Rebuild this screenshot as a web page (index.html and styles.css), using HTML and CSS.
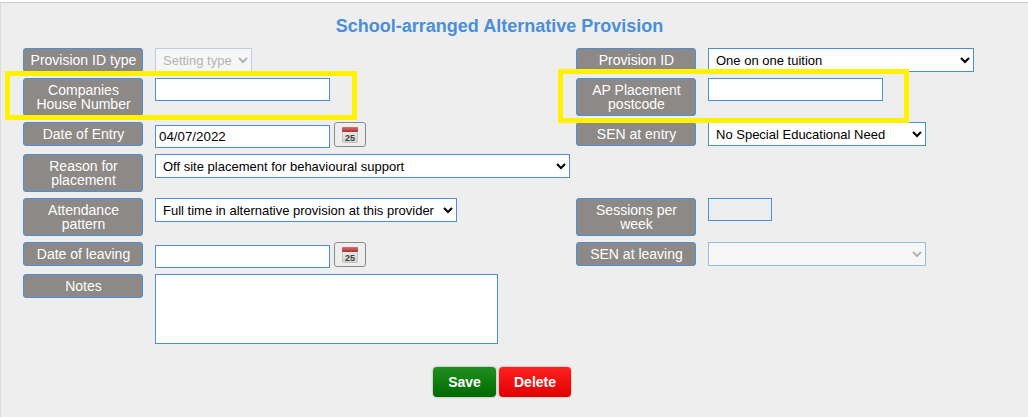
FILE: index.html
```html
<!DOCTYPE html>
<html lang="en">
<head>
<meta charset="utf-8">
<title>School-arranged Alternative Provision</title>
<link rel="stylesheet" href="styles.css">
</head>
<body>
<svg class="sprites" width="0" height="0" aria-hidden="true">
  <defs>
    <linearGradient id="calBody" x1="0" y1="0" x2="0" y2="1"><stop offset="0" stop-color="#f4f4f2"/><stop offset="1" stop-color="#cfcfcb"/></linearGradient>
    <linearGradient id="calTop" x1="0" y1="0" x2="0" y2="1"><stop offset="0" stop-color="#d9706f"/><stop offset="1" stop-color="#a92f2f"/></linearGradient>
    <symbol id="cal" viewBox="0 0 16 16">
      <rect x="0.5" y="0.5" width="15" height="15" rx="1" fill="url(#calBody)" stroke="#c4c4c0"/>
      <rect x="0" y="0" width="16" height="5" rx="1" fill="url(#calTop)"/>
      <text x="8" y="14" text-anchor="middle" class="cal-num">25</text>
    </symbol>
  </defs>
</svg>
<main class="page">
  <h1 class="title">School-arranged Alternative Provision</h1>
  <form class="grid">
    <label class="lbl">Provision ID type</label>
    <div class="field"><select class="ctl sel-type" disabled><option>Setting type</option></select></div>
    <label class="lbl">Provision ID</label>
    <div class="field"><select class="ctl sel-prov"><option>One on one tuition</option></select></div>

    <label class="lbl">Companies House Number</label>
    <div class="field"><input class="ctl txt" type="text"></div>
    <label class="lbl">AP Placement postcode</label>
    <div class="field"><input class="ctl txt" type="text"></div>

    <label class="lbl">Date of Entry</label>
    <div class="field date"><input class="ctl txt date-input" type="text" value="04/07/2022"><button class="cal-btn" type="button" aria-label="Calendar"><svg class="cal-ico"><use href="#cal"/></svg></button></div>
    <label class="lbl">SEN at entry</label>
    <div class="field"><select class="ctl sel-sen"><option>No Special Educational Need</option></select></div>

    <label class="lbl">Reason for placement</label>
    <div class="field"><select class="ctl sel-reason"><option>Off site placement for behavioural support</option></select></div>
    <div class="blank"></div>
    <div class="blank"></div>

    <label class="lbl">Attendance pattern</label>
    <div class="field"><select class="ctl sel-att"><option>Full time in alternative provision at this provider</option></select></div>
    <label class="lbl">Sessions per week</label>
    <div class="field"><input class="ctl txt sessions" type="text"></div>

    <label class="lbl">Date of leaving</label>
    <div class="field date"><input class="ctl txt date-input" type="text"><button class="cal-btn" type="button" aria-label="Calendar"><svg class="cal-ico"><use href="#cal"/></svg></button></div>
    <label class="lbl">SEN at leaving</label>
    <div class="field"><select class="ctl sel-sen sel-off" disabled><option></option></select></div>

    <label class="lbl">Notes</label>
    <div class="field notes-cell"><textarea class="ctl notes"></textarea></div>
  </form>
  <div class="actions">
    <button class="btn save" type="button">Save</button>
    <button class="btn delete" type="button">Delete</button>
  </div>
  <div class="mark mark-left"></div>
  <div class="mark mark-right"></div>
</main>
</body>
</html>
```
FILE: styles.css
```css
* { box-sizing: border-box; }
html, body { height: 100%; }
body {
  margin: 0;
  background: #fff;
  font-family: "Liberation Sans", Arial, sans-serif;
  overflow: hidden;
}
.sprites { position: absolute; }
.page {
  position: relative;
  height: 415px;
  background: #eee;
  border-top: 1px solid #ccc;
  border-left: 1px solid #ddd;
  margin-top: 2px;
  padding: 13px 0 0 22px;
}
.title {
  margin: 0;
  width: 953px;
  font-size: 18px;
  line-height: 20px;
  font-weight: bold;
  color: #4a8fd8;
  text-align: center;
}
.grid {
  display: grid;
  grid-template-columns: 120px 409px 120px 266px;
  grid-template-rows: 24px 38px 26px 38px 38px 26px 70px;
  column-gap: 12px;
  row-gap: 6px;
  margin-top: 12px;
}
.lbl {
  display: flex;
  align-items: center;
  justify-content: center;
  align-self: start;
  min-height: 24px;
  padding: 4px 5px 4px 6px;
  background: #8c8987;
  border: 1px solid #4a90d9;
  border-radius: 3px;
  color: #fff;
  font-size: 14px;
  line-height: 14px;
  text-align: center;
}
.field { display: flex; align-items: flex-start; min-width: 0; }
.date { gap: 4px; }
.ctl {
  background: #fff;
  border: 1px solid #4a8fd8;
  border-radius: 0;
  font-family: "Liberation Sans", Arial, sans-serif;
  font-size: 13.33px;
  color: #000;
  outline: none;
}
.txt { width: 175px; height: 23px; padding: 1px 3px; }
.date-input { margin-top: 3px; }
select.ctl { height: 24px; padding: 0 0 0 3px; flex: none; font-size: 13px; }
.sel-type { width: 97px; background: #fafafa; color: #9a9a9a; border-color: #9fc3ea; }
.sel-prov { width: 266px; }
.sel-sen { width: 218px; }
.sel-reason { width: 415px; }
.sel-att { width: 302px; }
select.sel-off { background: #fafafa; border-color: #75a9e2; color: #9a9a9a; }
.sessions { width: 64px; background: transparent; }
.cal-btn {
  display: flex;
  align-items: center;
  justify-content: center;
  width: 32px;
  height: 25px;
  padding: 0;
  background: #eee;
  border: 1px solid #8a8a8a;
  border-radius: 3px;
}
.cal-ico { display: block; width: 16px; height: 16px; }
.cal-num { font: bold 9px "Liberation Sans", Arial, sans-serif; fill: #444; }
.notes-cell { grid-column: 2 / span 3; }
.notes { display: block; width: 343px; height: 70px; resize: none; }
.actions {
  display: flex;
  justify-content: center;
  gap: 3px;
  width: 958px;
  margin-top: 23px;
}
.btn {
  height: 30px;
  border: 0;
  border-radius: 4px;
  color: #fff;
  font: bold 14px "Liberation Sans", Arial, sans-serif;
  box-shadow: 0 0 2px rgba(0,0,0,.45);
}
.save { width: 63px; background: linear-gradient(#1f8f1f, #006a00); }
.delete { width: 72px; background: linear-gradient(#ff2020, #e00000); }
.mark {
  position: absolute;
  border: 5px solid #fff200;
  pointer-events: none;
}
.mark-left { left: 4px; top: 68px; width: 352px; height: 49px; }
.mark-right { left: 557px; top: 66px; width: 351px; height: 54px; }
```
